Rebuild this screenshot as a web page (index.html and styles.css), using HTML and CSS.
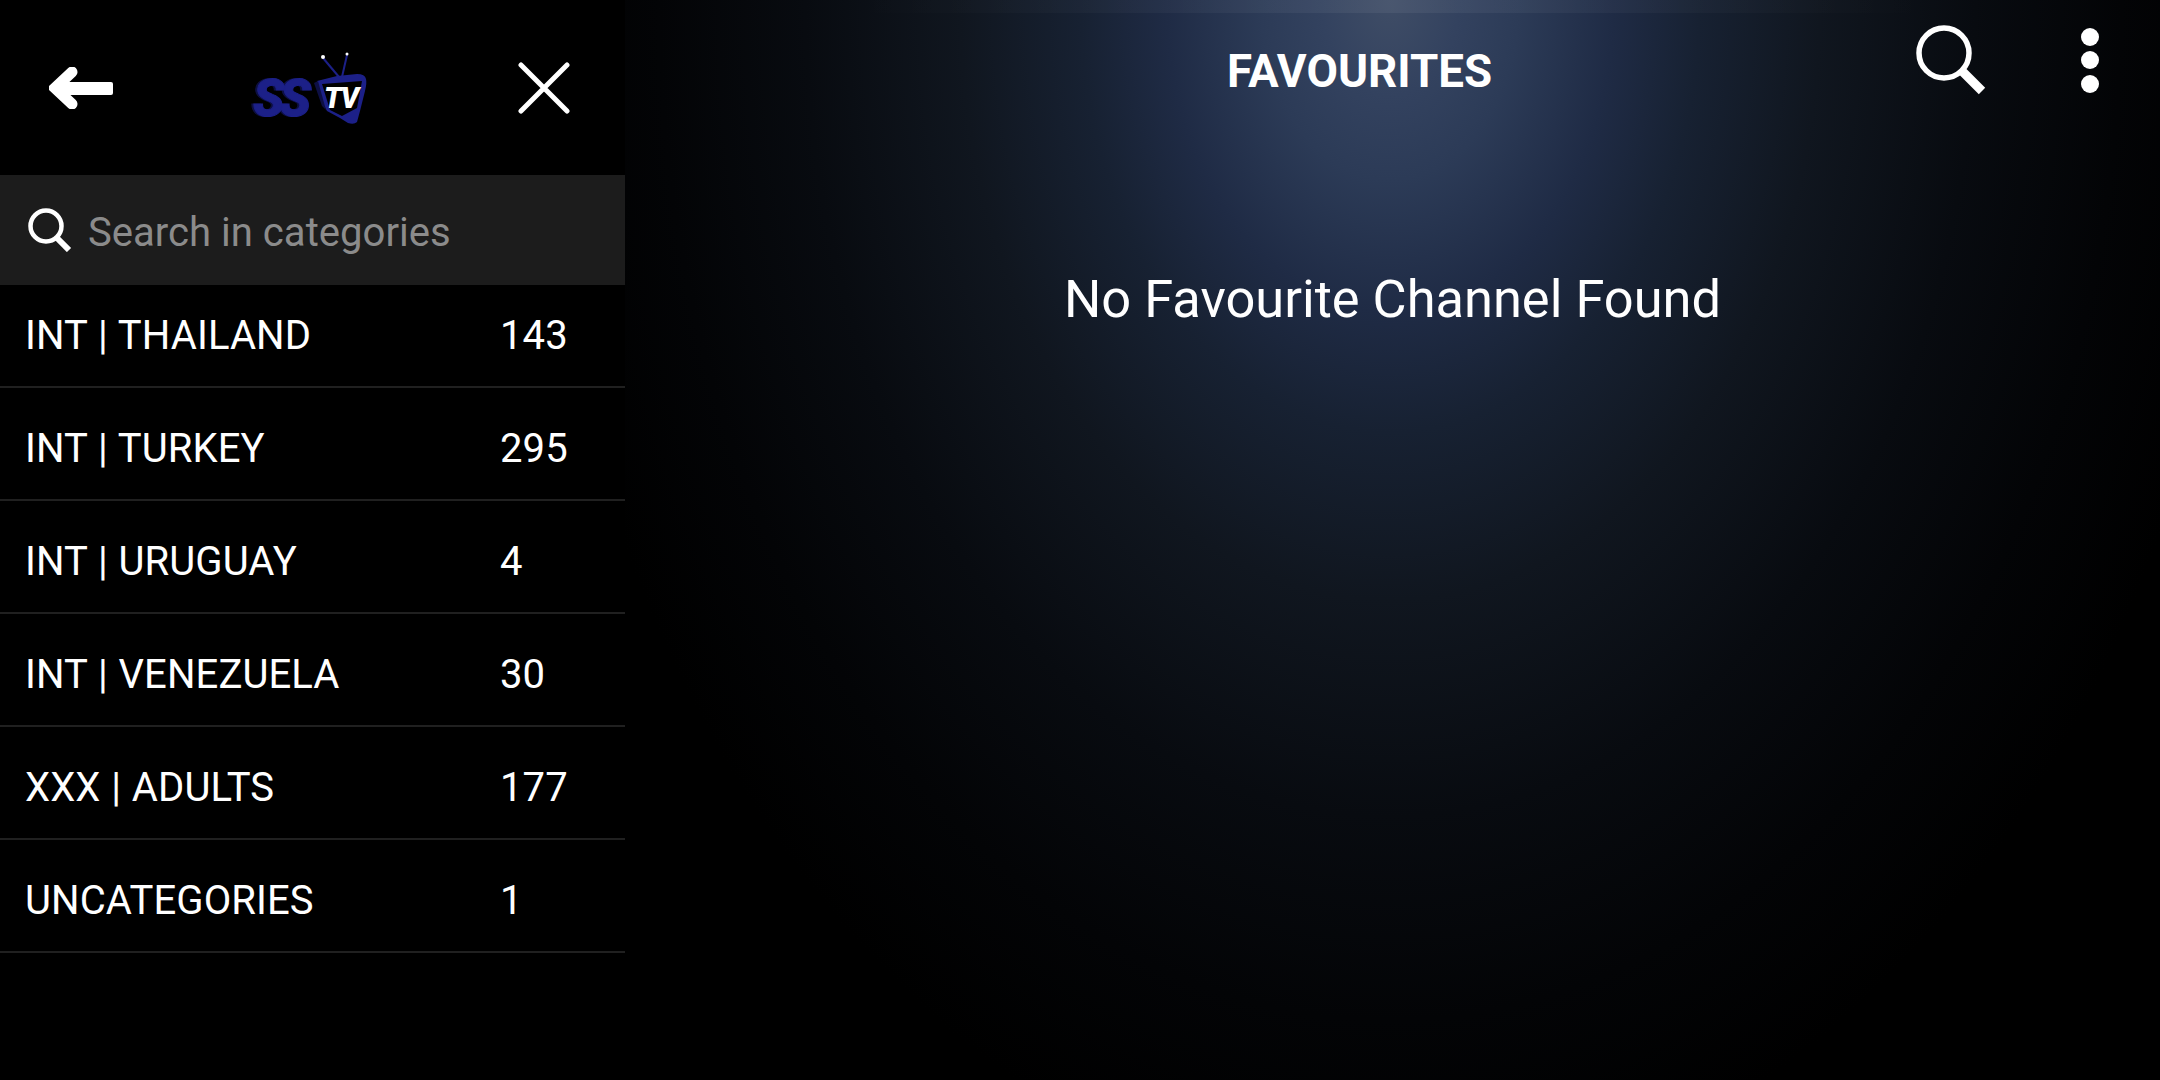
FILE: index.html
```html
<!DOCTYPE html>
<html lang="en">
<head>
<meta charset="utf-8">
<title>Favourites</title>
<link rel="stylesheet" href="styles.css">
</head>
<body>
<div class="app">
  <aside class="sidebar">
    <div class="side-head">
      <svg class="ic-back" viewBox="0 0 64 42" width="64" height="42"><path d="M23 5 L6 21 L23 37" fill="none" stroke="#fff" stroke-width="11" stroke-linecap="round" stroke-linejoin="miter"/><path d="M12 15 H62 Q64 15 64 17 V26 Q64 28 62 28 H12 Z" fill="#fff"/></svg>
      <svg class="logo" viewBox="0 -7 120 90" width="120" height="90">
        <line x1="73" y1="8" x2="89" y2="27" stroke="#1c2088" stroke-width="2"/>
        <line x1="97" y1="5" x2="92" y2="27" stroke="#1c2088" stroke-width="2"/>
        <circle cx="73" cy="7" r="2" fill="#fff"/>
        <circle cx="97" cy="4" r="1.5" fill="#fff"/>
        <path d="M67 31 L87 26 L107 24 Q115 24 116 29 Q117 33 115 41 L110 61 L107 72 Q104 75 98 73 L90 68 L77 61 L70 48 Z" fill="#1c2088"/>
        <path d="M64 33 L68 31 L76 60 L72 56 Z" fill="#0d0f44"/>
        <path d="M72 34 L112 31 L107 58 L92 66 L80 60 Z" fill="#000"/>
        <text class="logo-ss" x="3" y="66">SS</text>
        <text class="logo-tv" x="74" y="58">TV</text>
      </svg>
      <svg class="ic-close" viewBox="0 0 52 52" width="52" height="52"><path d="M3 3 L49 49 M49 3 L3 49" stroke="#fff" stroke-width="5" stroke-linecap="round"/></svg>
    </div>
    <div class="side-search">
      <svg class="ic-search-small" viewBox="0 0 44 44" width="44" height="44"><circle cx="18" cy="18" r="15.5" fill="none" stroke="#fff" stroke-width="4.5"/><path d="M28 29 L41 42" stroke="#fff" stroke-width="6"/></svg>
      <span class="placeholder">Search in categories</span>
    </div>
    <ul class="cats">
      <li class="cat"><span class="cat-name">INT | THAILAND</span><span class="cat-count">143</span></li>
      <li class="cat"><span class="cat-name">INT | TURKEY</span><span class="cat-count">295</span></li>
      <li class="cat"><span class="cat-name">INT | URUGUAY</span><span class="cat-count">4</span></li>
      <li class="cat"><span class="cat-name">INT | VENEZUELA</span><span class="cat-count">30</span></li>
      <li class="cat"><span class="cat-name">XXX | ADULTS</span><span class="cat-count">177</span></li>
      <li class="cat"><span class="cat-name">UNCATEGORIES</span><span class="cat-count">1</span></li>
    </ul>
  </aside>
  <main class="main">
    <div class="strip"></div>
    <header class="main-head">
      <h1 class="title">FAVOURITES</h1>
      <svg class="ic-search" viewBox="0 0 70 72" width="70" height="72"><circle cx="28" cy="29" r="25" fill="none" stroke="#fff" stroke-width="5.5"/><path d="M46 47 L66 67" stroke="#fff" stroke-width="9"/></svg>
      <div class="dots"><span class="dot"></span><span class="dot"></span><span class="dot"></span></div>
    </header>
    <p class="empty">No Favourite Channel Found</p>
  </main>
</div>
</body>
</html>
```
FILE: styles.css
```css
* { box-sizing: border-box; }
html, body { margin: 0; padding: 0; height: 100%; background: #000; }
body { font-family: Roboto, "Liberation Sans", sans-serif; color: #fff; overflow: hidden; }
.app { display: flex; width: 2160px; height: 1080px; }

.sidebar { width: 625px; flex: none; background: #000; }
.side-head { height: 175px; display: flex; align-items: center; padding: 0 55px 0 49px; }
.ic-back { display: block; }
.logo { display: block; margin-left: 137px; }
.logo-ss { font: italic 900 52px Roboto, sans-serif; fill: #1c2088; stroke: #1c2088; stroke-width: 1px; letter-spacing: -5px; filter: drop-shadow(-2px 0 0 #0d0f44); }
.logo-tv { font: italic 900 29px Roboto, sans-serif; fill: #fff; letter-spacing: -1.5px; }
.ic-close { display: block; margin-left: auto; }

.side-search { height: 110px; background: #1c1c1c; display: flex; align-items: center; padding-left: 28px; }
.ic-search-small { display: block; margin-right: 16px; }
.placeholder { font-size: 40.1px; color: #8b8b8b; padding-top: 5px; }

.cats { list-style: none; margin: 0; padding: 0; overflow: hidden; }
.cat { height: 113px; display: flex; align-items: center; padding: 10px 0 0 25px; border-bottom: 2px solid #202020; font-size: 40px; font-weight: 400; word-spacing: .7px; letter-spacing: .1px; }
.cat:first-child { margin-top: -10px; }
.cat-name { width: 475px; flex: none; }

.main { flex: 1; position: relative; min-width: 0;
  background: radial-gradient(ellipse 860px 1200px at 765px 0, #3f4d66 0%, #33425f 8%, #2c3b57 15%, #1f2b45 26%, #172132 36%, #10161f 50%, #080b10 68%, #030406 85%, #000 100%); }
.strip { height: 13px; background: linear-gradient(90deg, transparent 15%, rgba(255,255,255,.06) 50%, transparent 85%); }
.main-head { display: flex; align-items: flex-start; padding-left: 602px; }
.title { margin: 22px 0 0; font-size: 45.7px; line-height: 74px; font-weight: 700; }
.ic-search { display: block; margin: 11px 0 0 auto; }
.dots { display: flex; flex-direction: column; gap: 5.3px; margin: 15px 61px 0 95px; }
.dot { display: block; width: 18px; height: 18px; border-radius: 50%; background: #fff; }
.empty { margin: 160px 0 0; text-align: center; font-size: 52.4px; line-height: 60px; }
```
